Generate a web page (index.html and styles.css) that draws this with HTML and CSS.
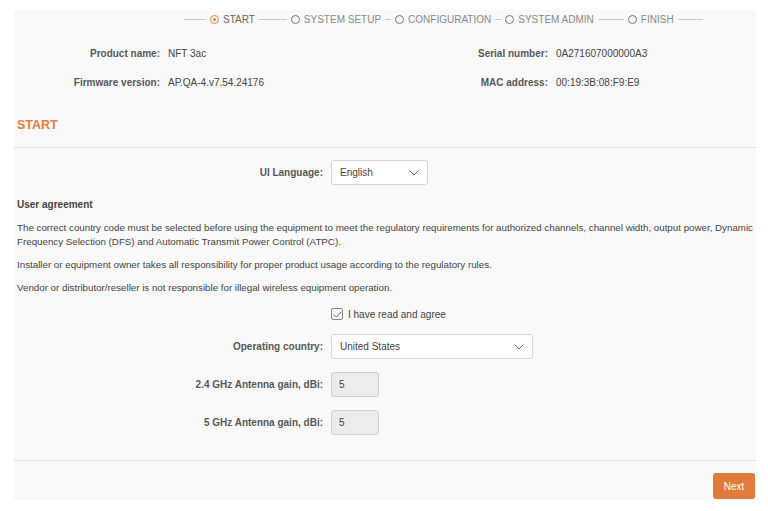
FILE: index.html
```html
<!DOCTYPE html>
<html>
<head>
<meta charset="utf-8">
<link rel="stylesheet" href="styles.css">
</head>
<body>
<div class="panel">
  <div class="stepper">
    <span class="line" style="width:22px"></span>
    <span class="step active"><span class="dot"></span>START</span>
    <span class="line" style="width:28px"></span>
    <span class="step"><span class="dot"></span>SYSTEM SETUP</span>
    <span class="line" style="width:6px"></span>
    <span class="step"><span class="dot"></span>CONFIGURATION</span>
    <span class="line" style="width:6px"></span>
    <span class="step"><span class="dot"></span>SYSTEM ADMIN</span>
    <span class="line" style="width:26px"></span>
    <span class="step"><span class="dot"></span>FINISH</span>
    <span class="line" style="width:25px"></span>
  </div>

  <div class="info">
    <div class="lbl">Product name:</div><div class="val">NFT 3ac</div>
    <div class="lbl">Serial number:</div><div class="val">0A271607000000A3</div>
    <div class="lbl">Firmware version:</div><div class="val">AP.QA-4.v7.54.24176</div>
    <div class="lbl">MAC address:</div><div class="val">00:19:3B:08:F9:E9</div>
  </div>

  <h2 class="section-title">START</h2>
  <div class="rule"></div>

  <div class="form-row lang-row">
    <label class="flbl">UI Language:</label>
    <div class="select small"><span>English</span><svg class="chev" width="10" height="6" viewBox="0 0 10 6"><path d="M0.5 0.5 L5 5 L9.5 0.5" fill="none" stroke="#666" stroke-width="1"/></svg></div>
  </div>

  <div class="agreement">
    <div class="ua-title">User agreement</div>
    <p class="p1">The correct country code must be selected before using the equipment to meet the regulatory requirements for authorized channels, channel width, output power, Dynamic Frequency Selection (DFS) and Automatic Transmit Power Control (ATPC).</p>
    <p>Installer or equipment owner takes all responsibility for proper product usage according to the regulatory rules.</p>
    <p>Vendor or distributor/reseller is not responsible for illegal wireless equipment operation.</p>
  </div>

  <div class="form-row check-row">
    <span class="flbl"></span>
    <label class="check"><span class="box"><svg width="9" height="7" viewBox="0 0 9 7"><path d="M0.8 3.5 L3.3 6 L8.3 0.8" fill="none" stroke="#666" stroke-width="1"/></svg></span>I have read and agree</label>
  </div>

  <div class="form-row country-row">
    <label class="flbl">Operating country:</label>
    <div class="select wide"><span>United States</span><svg class="chev" width="10" height="6" viewBox="0 0 10 6"><path d="M0.5 0.5 L5 5 L9.5 0.5" fill="none" stroke="#666" stroke-width="1"/></svg></div>
  </div>

  <div class="form-row gain-row">
    <label class="flbl">2.4 GHz Antenna gain, dBi:</label>
    <div class="input">5</div>
  </div>

  <div class="form-row gain-row">
    <label class="flbl">5 GHz Antenna gain, dBi:</label>
    <div class="input">5</div>
  </div>

  <div class="rule bottom"></div>
  <div class="footer">
    <button class="next">Next</button>
  </div>
</div>
</body>
</html>
```

FILE: styles.css
```css
* { box-sizing: border-box; }
html, body { margin: 0; padding: 0; background: #ffffff; }
body {
  font-family: "Liberation Sans", Arial, sans-serif;
  font-size: 10px;
  color: #444;
  padding: 10px 12px 11px 14px;
}
.panel {
  width: 742px;
  height: 490px;
  background: #f9f9f9;
  position: relative;
}
.stepper {
  display: flex;
  align-items: center;
  gap: 4px;
  padding-left: 170px;
  height: 19px;
  color: #888;
  font-size: 10px;
}
.stepper .line {
  display: inline-block;
  height: 1px;
  background: #c9c9c9;
}
.step {
  display: inline-flex;
  align-items: center;
  gap: 4px;
  color: #8a8a8a;
}
.step .dot {
  width: 9px;
  height: 9px;
  border: 1.5px solid #777;
  border-radius: 50%;
  display: inline-block;
  position: relative;
}
.step.active { color: #666; }
.step.active .dot { border-color: #e57f3c; }
.step.active .dot::after {
  content: "";
  position: absolute;
  left: 1.5px; top: 1.5px;
  width: 3px; height: 3px;
  border-radius: 50%;
  background: #e57f3c;
}
.info {
  display: grid;
  grid-template-columns: 146px 214px 160px auto;
  column-gap: 7px;
  row-gap: 17px;
  margin-top: 19px;
  line-height: 12px;
}
.info .lbl { text-align: right; font-weight: bold; color: #585858; }
.info .val { color: #444; padding-left: 1px; }
.section-title {
  margin: 29px 0 0 3px;
  font-size: 12.5px;
  font-weight: bold;
  color: #e57f3c;
  line-height: 14px;
}
.rule {
  height: 1px;
  background: #e4e4e4;
  margin-top: 15px;
}
.form-row {
  display: grid;
  grid-template-columns: 309px auto;
  column-gap: 8px;
  align-items: center;
}
.flbl {
  text-align: right;
  font-weight: bold;
  color: #585858;
}
.lang-row { margin-top: 12px; }
.select {
  height: 25px;
  background: #fff;
  border: 1px solid #d6d6d6;
  border-radius: 3px;
  display: flex;
  align-items: center;
  justify-content: space-between;
  padding: 0 8px 0 8px;
  color: #444;
}
.select.small { width: 97px; }
.select.wide { width: 202px; }
.select .chev { margin-top: 1px; }
.agreement { padding-left: 3px; }
.ua-title {
  margin-top: 14px;
  font-weight: bold;
  color: #444;
  line-height: 12px;
}
.agreement p {
  margin: 9px 0 0 0;
  line-height: 14px;
  color: #444;
  font-size: 9.75px;
}
.agreement p.p1 { margin-top: 10px; padding-right: 2px; }
.check-row { margin-top: 13px; }
.check {
  display: flex;
  align-items: center;
  gap: 5px;
  color: #444;
}
.box {
  width: 12px; height: 12px;
  border: 1px solid #888;
  border-radius: 2px;
  display: inline-flex;
  align-items: center;
  justify-content: center;
  background: #fafafa;
}
.country-row { margin-top: 14px; }
.input {
  width: 48px;
  height: 25px;
  background: #ececec;
  border: 1px solid #d2d2d2;
  border-radius: 3px;
  display: flex;
  align-items: center;
  padding-left: 7px;
  color: #444;
}
.gain-row { margin-top: 13px; }
.rule.bottom { margin-top: 25px; }
.footer {
  display: flex;
  justify-content: flex-end;
  padding-top: 12px;
}
.next {
  width: 42px;
  height: 26px;
  border: none;
  border-radius: 3px;
  background: #e07b39;
  color: #fff;
  font-family: "Liberation Sans", Arial, sans-serif;
  font-size: 10px;
  padding: 0;
  margin-right: 1px;
}
```
